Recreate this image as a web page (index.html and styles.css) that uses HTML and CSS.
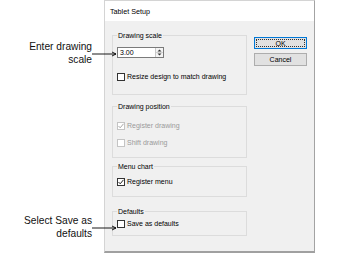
FILE: index.html
```html
<!DOCTYPE html>
<html>
<head>
<meta charset="utf-8">
<link rel="stylesheet" href="styles.css">
</head>
<body>
<div class="page">
  <div class="callouts">
    <div class="callout callout-scale">Enter drawing<br>scale
      <svg class="arrow" width="25" height="6" viewBox="0 0 25 6"><path d="M0 3H24M20 1L24 3L20 5" fill="none" stroke="#000" stroke-width="0.9"/></svg>
    </div>
    <div class="callout callout-defaults">Select Save as<br>defaults
      <svg class="arrow" width="25" height="6" viewBox="0 0 25 6"><path d="M0 3H24M20 1L24 3L20 5" fill="none" stroke="#000" stroke-width="0.9"/></svg>
    </div>
  </div>
  <div class="dialog">
    <div class="titlebar">Tablet Setup</div>
    <div class="body">
      <div class="groups">
        <div class="group g1">
          <div class="legend">Drawing scale</div>
          <div class="spin">
            <span class="spin-value">3.00</span>
            <span class="spin-btns">
              <svg width="7" height="9" viewBox="0 0 7 9"><path d="M1.5 3.5L3.5 1.5L5.5 3.5Z" fill="#333"/><path d="M0 4.5H7" stroke="#bbb" stroke-width="0.6"/><path d="M1.5 5.5L3.5 7.5L5.5 5.5Z" fill="#333"/></svg>
            </span>
          </div>
          <div class="check-row r-resize"><span class="box"></span><span>Resize design to match drawing</span></div>
        </div>
        <div class="group g2">
          <div class="legend">Drawing position</div>
          <div class="check-row disabled r-reg"><span class="box"><svg width="8" height="8" viewBox="0 0 8 8"><path d="M1.5 4L3.2 5.8L6.5 1.8" fill="none" stroke="#a8a8a8" stroke-width="1"/></svg></span><span>Register drawing</span></div>
          <div class="check-row disabled r-shift"><span class="box"></span><span>Shift drawing</span></div>
        </div>
        <div class="group g3">
          <div class="legend">Menu chart</div>
          <div class="check-row r-menu"><span class="box"><svg width="8" height="8" viewBox="0 0 8 8"><path d="M1.5 4L3.2 5.8L6.5 1.8" fill="none" stroke="#222" stroke-width="1"/></svg></span><span>Register menu</span></div>
        </div>
        <div class="group g4">
          <div class="legend">Defaults</div>
          <div class="check-row r-def"><span class="box"></span><span>Save as defaults</span></div>
        </div>
      </div>
      <div class="buttons">
        <div class="btn btn-ok"><span class="focus">OK</span></div>
        <div class="btn btn-cancel">Cancel</div>
      </div>
    </div>
  </div>
</div>
</body>
</html>
```
FILE: styles.css
```css
html, body {
  margin: 0;
  padding: 0;
  background: #fff;
}
body {
  width: 341px;
  height: 270px;
  overflow: hidden;
  font-family: "Liberation Sans", Arial, sans-serif;
}
.page {
  display: flex;
  align-items: flex-start;
}
.callouts {
  width: 104px;
  display: flex;
  flex-direction: column;
  align-items: flex-end;
}
.callout {
  position: relative;
  margin-right: 12px;
  text-align: right;
  font-size: 10.2px;
  line-height: 13px;
  color: #111;
}
.callout-scale {
  margin-top: 40px;
}
.callout-defaults {
  margin-top: 148px;
}
.arrow {
  position: absolute;
  left: 100%;
  top: 11px;
}
.dialog {
  width: 211px;
  height: 253px;
  box-sizing: border-box;
  border-top: 1px solid #d4d4d4;
  border-left: 1px solid #d4d4d4;
  border-right: 1px solid #a3a3a3;
  border-bottom: 2px solid #a0a0a0;
  display: flex;
  flex-direction: column;
  font-size: 7px;
  color: #000;
}
.titlebar {
  height: 20px;
  line-height: 21px;
  background: #fff;
  padding-left: 5px;
  font-size: 7.2px;
}
.body {
  flex: 1;
  background: #f0f0f0;
  display: flex;
  padding: 0 6px 0 7px;
  gap: 7px;
}
.groups {
  width: 135px;
  display: flex;
  flex-direction: column;
}
.group {
  box-sizing: border-box;
  border: 1px solid #dcdcdc;
  padding: 0 4px;
}
.legend {
  width: max-content;
  height: 9px;
  line-height: 9px;
  margin: -5px 0 0 0;
  padding: 0 1px;
  background: #f0f0f0;
}
.g1 { margin-top: 14px; height: 60px; }
.g2 { margin-top: 11px; height: 52px; }
.g3 { margin-top: 8px; height: 31px; }
.g4 { margin-top: 14px; height: 25px; }

.spin {
  margin-top: 7px;
  width: 47px;
  height: 11px;
  box-sizing: border-box;
  border: 1px solid #7a7a7a;
  background: #fff;
  display: flex;
  align-items: stretch;
}
.spin-value {
  flex: 1;
  line-height: 9px;
  padding-left: 2px;
}
.spin-btns {
  width: 7px;
  border-left: 1px solid #c8c8c8;
  background: #f4f4f4;
  display: flex;
}
.check-row {
  display: flex;
  align-items: center;
  gap: 2px;
  height: 9px;
  line-height: 9px;
}
.box {
  width: 8px;
  height: 8px;
  box-sizing: border-box;
  border: 1px solid #333;
  background: #fff;
  display: flex;
  align-items: center;
  justify-content: center;
}
.box svg {
  flex: none;
}
.disabled {
  color: #9a9a9a;
}
.disabled .box {
  border-color: #c4c4c4;
}
.r-resize { margin-top: 14px; }
.r-reg { margin-top: 10px; }
.r-shift { margin-top: 8px; }
.r-menu { margin-top: 6px; }
.r-def { margin-top: 3px; }

.buttons {
  width: 53px;
  margin-top: 16px;
  display: flex;
  flex-direction: column;
  gap: 4px;
}
.btn {
  box-sizing: border-box;
  height: 13px;
  border: 1px solid #adadad;
  background: #e1e1e1;
  text-align: center;
  line-height: 11px;
  font-size: 7px;
}
.btn-ok {
  height: 12px;
  border-color: #0078d7;
  padding: 1px;
}
.btn-ok .focus {
  display: block;
  height: 100%;
  box-sizing: border-box;
  border: 1px dotted #333;
  line-height: 7px;
}
```
